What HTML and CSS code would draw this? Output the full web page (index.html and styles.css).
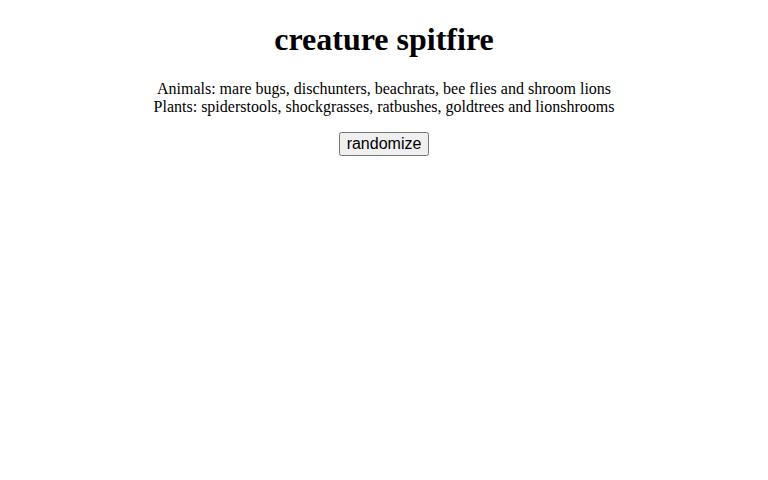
FILE: index.html
```html
<!DOCTYPE html>
<html lang="en">
<head>
    <meta charset="UTF-8">
    <meta name="viewport" content="width=device-width, initial-scale=1.0">
    <title>creature spitfire</title>
    <link rel="stylesheet" href="styles.css">
</head>
<body>
    <div class="container">
        <h1>creature spitfire</h1>
        <p class="lists">
            <span class="animals">Animals: mare bugs, dischunters, beachrats, bee flies and shroom lions</span><br>
            <span class="plants">Plants: spiderstools, shockgrasses, ratbushes, goldtrees and lionshrooms</span>
        </p>
        <button class="randomize">randomize</button>
    </div>
</body>
</html>
```

FILE: styles.css
```css
body {
    margin: 0;
    font-family: "Liberation Serif", "Times New Roman", serif;
    color: #000;
    background: #fff;
}
.container {
    text-align: center;
}
h1 {
    font-size: 32px;
    margin: 21px 0 22px;
}
.lists {
    font-size: 16px;
    margin: 0 0 16px;
}
.randomize {
    font-family: "Liberation Sans", Arial, sans-serif;
    font-size: 16px;
    padding: 1px 6px;
}
```
